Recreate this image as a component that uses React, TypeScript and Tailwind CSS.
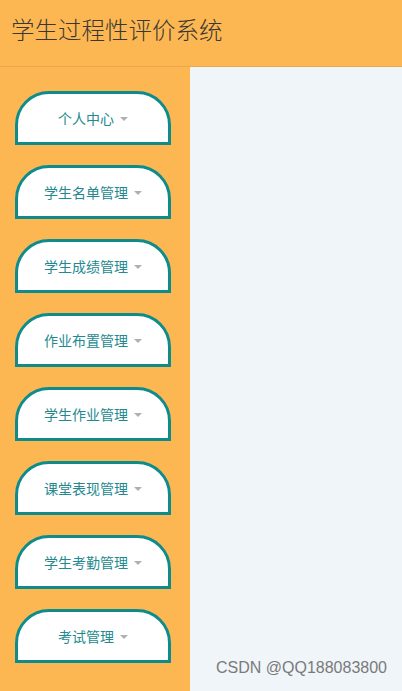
const menus = [
  '个人中心',
  '学生名单管理',
  '学生成绩管理',
  '作业布置管理',
  '学生作业管理',
  '课堂表现管理',
  '学生考勤管理',
  '考试管理',
];

function MenuButton({ label }: { label: string }) {
  return (
    <button className="flex h-[54px] w-[156px] items-center justify-center gap-[6px] rounded-t-[34px] border-[3px] border-[#0e8c8c] bg-white text-[14px] text-[#23898f]">
      <span>{label}</span>
      <span className="mt-[1px] h-0 w-0 border-x-[4px] border-t-[4px] border-x-transparent border-t-[#b0b0b0]" />
    </button>
  );
}

export default function App() {
  return (
    <div
      className="flex h-[691px] w-[402px] flex-col overflow-hidden"
      style={{ fontFamily: '"Noto Sans CJK SC", "Liberation Sans", sans-serif' }}
    >
      <header className="flex h-[67px] shrink-0 items-center border-b border-[#eaa948] bg-[#fdb752] pb-[7px] pl-[11px]">
        <h1 className="text-[23.5px] font-light leading-none text-[#3a3733]">学生过程性评价系统</h1>
      </header>
      <div className="flex flex-1">
        <aside className="flex w-[190px] shrink-0 flex-col items-start gap-[20px] bg-[#fdb752] pl-[15px] pt-[24px]">
          {menus.map((m) => (
            <MenuButton key={m} label={m} />
          ))}
        </aside>
        <main className="relative flex-1 bg-[#f0f5f9]">
          <span
            className="absolute bottom-[11px] right-[15px] text-[16px] text-[#7a7a7a]"
            style={{ fontFamily: '"Liberation Sans", sans-serif' }}
          >
            CSDN @QQ188083800
          </span>
        </main>
      </div>
    </div>
  );
}
